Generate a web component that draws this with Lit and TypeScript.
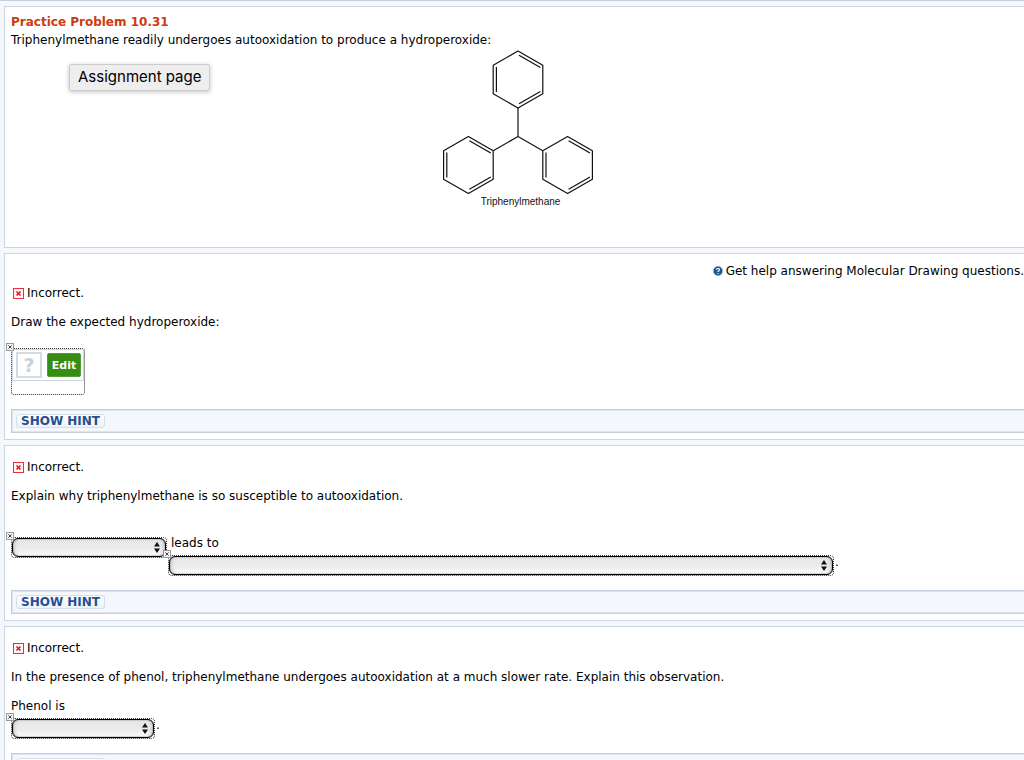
import { LitElement, html, svg, css } from "lit";
import { customElement, property } from "lit/decorators.js";

const clearMark = html`<svg class="mark" viewBox="0 0 8 8" width="8" height="8" aria-hidden="true">
  <rect x="0.5" y="0.5" width="7" height="7" fill="#f4f4f4" stroke="#999"></rect>
  <path d="M2.4 2.4L5.6 5.6M5.6 2.4L2.4 5.6" stroke="#444" stroke-width="1"></path>
</svg>`;

const markStyles = css`
  .mark {
    position: absolute;
    left: -6px;
    top: -6px;
    display: block;
  }
`;

@customElement("answer-select")
class AnswerSelect extends LitElement {
  @property() label = "";

  static styles = [
    markStyles,
    css`
      :host {
        display: block;
        box-sizing: border-box;
        max-width: 100%;
      }
      .frame {
        position: relative;
        border: 1px dotted #333;
        border-radius: 4px;
      }
      select {
        display: block;
        appearance: none;
        box-sizing: border-box;
        width: 100%;
        height: 19px;
        margin: 0;
        padding: 0 20px 0 8px;
        border: 1px solid #000;
        border-radius: 6px;
        background: linear-gradient(#e6e6e6, #ebebeb 50%, #fafafa);
        box-shadow: inset 0 0 1px #000, inset 3px 0 3px -1px #ccc, inset -3px 0 3px -1px #ccc;
        font: 12px "DejaVu Sans", sans-serif;
      }
      .arrows {
        position: absolute;
        right: 6px;
        top: 4px;
        pointer-events: none;
      }
    `,
  ];

  render() {
    return html`<div class="frame">
      <select aria-label=${this.label}>
        <option value=""></option>
      </select>
      <svg class="arrows" width="6" height="11" viewBox="0 0 6 11" aria-hidden="true">
        <path d="M3 0L6 4.6H0zM0 6.4H6L3 11z" fill="#111"></path>
      </svg>
      ${clearMark}
    </div>`;
  }
}

@customElement("hint-bar")
class HintBar extends LitElement {
  static styles = css`
    :host {
      display: flex;
      align-items: center;
      box-sizing: border-box;
      height: 24px;
      margin-top: 14px;
      padding-left: 4px;
      border: 1px solid #c5cedb;
      border-right: 0;
      background: #f4f8fc;
      box-shadow: inset 1px 1px #dde4ed, inset 0 -1px #dde4ed;
    }
    button {
      box-sizing: border-box;
      height: 14px;
      margin: 0;
      padding: 0 4px;
      border: 1px solid #d3e0ec;
      border-radius: 3px;
      background: linear-gradient(#fdfeff, #edf2f7);
      color: #264f8f;
      font: bold 12px/12px "DejaVu Sans", sans-serif;
      cursor: pointer;
    }
  `;
  render() {
    return html`<button type="button">SHOW HINT</button>`;
  }
}

@customElement("answer-status")
class AnswerStatus extends LitElement {
  static styles = css`
    :host {
      display: flex;
      align-items: center;
      gap: 3px;
      padding-left: 2px;
      line-height: 15px;
    }
  `;
  render() {
    return html`<svg width="11" height="11" viewBox="0 0 11 11" aria-hidden="true">
        <rect x="0.5" y="0.5" width="10" height="10" fill="#fff5f5" stroke="#e8303a"></rect>
        <path d="M3.5 3.5L7.5 7.5M7.5 3.5L3.5 7.5" stroke="#dd1420" stroke-width="1.5"></path>
      </svg>
      <span>Incorrect.</span>`;
  }
}

@customElement("molecule-figure")
class MoleculeFigure extends LitElement {
  static styles = css`
    figure {
      display: flex;
      flex-direction: column;
      align-items: center;
      margin: 0;
    }
    svg {
      display: block;
    }
    figcaption {
      padding-left: 6px;
      color: #111;
      font: 10px/12px "Liberation Sans", Arial, sans-serif;
    }
  `;

  private ring(x: number, y: number) {
    return svg`<path transform="translate(${x} ${y})" d="M0 -28.5L24.8 -14.3V14.3L0 28.5L-24.8 14.3V-14.3ZM-21.6 -12.4V12.4M1 -24.3L22.4 -12M22.4 12L1 24.3"></path>`;
  }

  render() {
    return html`<figure>
      <svg width="160" height="148" viewBox="0 0 160 148" role="img" aria-label="Triphenylmethane">
        <g fill="none" stroke="#111" stroke-width="1.2" stroke-linejoin="round">
          ${this.ring(80, 31.5)} ${this.ring(30.4, 117)} ${this.ring(129.6, 117)}
          <path d="M80 60V88.5M55.2 102.7L80 88.5L104.8 102.7"></path>
        </g>
      </svg>
      <figcaption>Triphenylmethane</figcaption>
    </figure>`;
  }
}

@customElement("app-root")
class AppRoot extends LitElement {
  static styles = [
    markStyles,
    css`
      :host {
        display: block;
        box-sizing: border-box;
        height: 100vh;
        overflow: hidden;
        border-top: 1px solid #c8d0e0;
        background: #f4f8fc;
        color: #000;
        font: 12px/15px "DejaVu Sans", Verdana, sans-serif;
      }
      main {
        display: flex;
        flex-direction: column;
        gap: 5px;
        padding: 5px 0 0 4px;
      }
      section {
        position: relative;
        padding: 14px 0 6px 6px;
        border: 1px solid #cdd5e3;
        border-right: 0;
        background: #fff;
      }
      .intro {
        padding: 7px 0 39px 6px;
      }
      .drawing {
        padding-top: 10px;
      }
      h1 {
        margin: 0;
        color: #cc3c10;
        font-size: 12px;
        line-height: 16px;
      }
      p {
        margin: 14px 0 0;
      }
      .lead {
        margin: 0;
        padding-top: 2px;
        line-height: 16px;
      }
      .tip {
        position: absolute;
        left: 64px;
        top: 57px;
        padding: 3px 8px 4px;
        border: 1px solid #ccc;
        border-radius: 2px;
        background: #eee;
        box-shadow: 0 1px 4px rgba(0, 0, 0, 0.25);
        color: #000;
        font: 15px/18px Inter, sans-serif;
      }
      .help {
        display: flex;
        justify-content: flex-end;
        margin-bottom: 7px;
      }
      .help a {
        display: flex;
        align-items: center;
        gap: 3px;
        color: inherit;
        text-decoration: none;
      }
      .help svg {
        margin-bottom: 2px;
      }
      .sketch {
        position: relative;
        box-sizing: border-box;
        width: 74px;
        height: 47px;
        margin-top: 18px;
        border: 1px dotted #333;
        border-radius: 3px;
      }
      .tools {
        display: flex;
        align-items: center;
        justify-content: space-between;
        box-sizing: border-box;
        height: 32px;
        padding: 0 2px 0 3px;
        border: 1px solid #cbd5e1;
      }
      .preview {
        box-sizing: border-box;
        width: 26px;
        height: 26px;
        border: 2px solid #d2dce6;
        color: #c8d1dc;
        font-size: 19px;
        font-weight: bold;
        line-height: 22px;
        text-align: center;
      }
      .edit {
        width: 34px;
        height: 24px;
        margin: 0;
        padding: 0;
        border: 1px solid #4ca02d;
        border-radius: 2px;
        background: #378d14;
        color: #fff;
        font: bold 11px "DejaVu Sans", sans-serif;
      }
      .sentence {
        display: flex;
        align-items: flex-start;
        gap: 1px;
        margin-top: 32px;
      }
      .first {
        width: 156px;
        margin-top: 1px;
      }
      .rest {
        flex: 1;
        min-width: 0;
      }
      .words {
        padding: 0 0 4px 3px;
      }
      .ended {
        display: flex;
        gap: 1px;
      }
      .wide {
        width: 666px;
      }
      .short {
        width: 144px;
      }
      .phenol {
        margin-top: 4px;
      }
    `,
  ];

  render() {
    return html`<main>
      <section class="intro">
        <h1>Practice Problem 10.31</h1>
        <p class="lead">Triphenylmethane readily undergoes autooxidation to produce a hydroperoxide:</p>
        <molecule-figure></molecule-figure>
        <div class="tip" role="tooltip">Assignment page</div>
      </section>

      <section class="drawing">
        <div class="help">
          <a href="#help">
            <svg width="10" height="10" viewBox="0 0 10 10" aria-hidden="true">
              <circle cx="5" cy="5" r="4.7" fill="#1c5a90" stroke="#9dbbd2" stroke-width="0.6"></circle>
              <path d="M3.5 3.8C3.5 2 6.6 2 6.5 3.8C6.4 4.8 5 4.7 5 6M5 6.9V8" fill="none" stroke="#fff" stroke-width="1.1"></path>
            </svg>
            <span>Get help answering Molecular Drawing questions.</span>
          </a>
        </div>
        <answer-status></answer-status>
        <p>Draw the expected hydroperoxide:</p>
        <div class="sketch">
          <div class="tools">
            <div class="preview">?</div>
            <button class="edit" type="button">Edit</button>
          </div>
          ${clearMark}
        </div>
        <hint-bar></hint-bar>
      </section>

      <section>
        <answer-status></answer-status>
        <p>Explain why triphenylmethane is so susceptible to autooxidation.</p>
        <div class="sentence">
          <answer-select class="first" label="Cause"></answer-select>
          <div class="rest">
            <div class="words">leads to</div>
            <div class="ended">
              <answer-select class="wide" label="Effect"></answer-select>
              <span>.</span>
            </div>
          </div>
        </div>
        <hint-bar></hint-bar>
      </section>

      <section>
        <answer-status></answer-status>
        <p>
          In the presence of phenol, triphenylmethane undergoes autooxidation at a much slower rate. Explain this
          observation.
        </p>
        <p>Phenol is</p>
        <div class="ended phenol">
          <answer-select class="short" label="Phenol is"></answer-select>
          <span>.</span>
        </div>
        <hint-bar></hint-bar>
      </section>
    </main>`;
  }
}
